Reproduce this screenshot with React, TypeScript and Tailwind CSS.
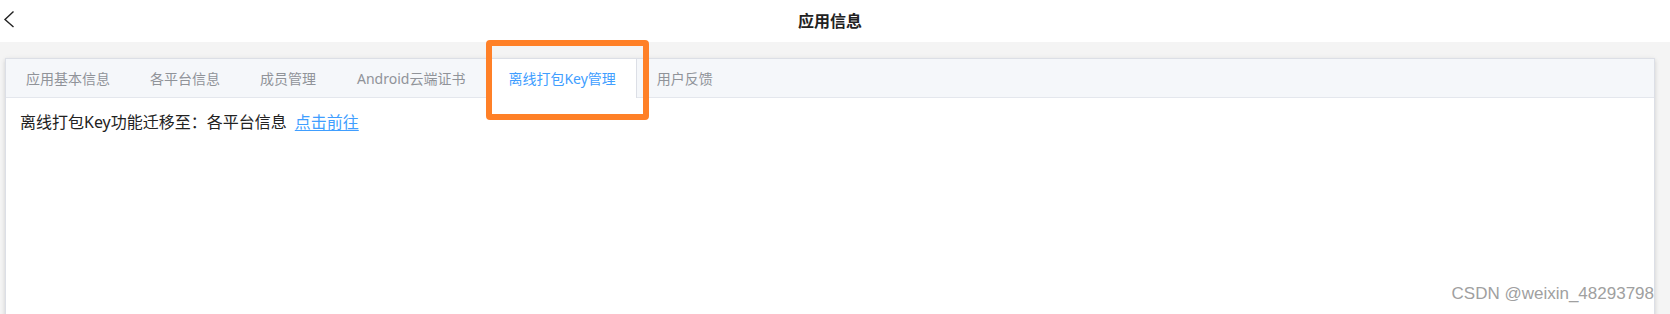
import React from "react";

const tabs = ["应用基本信息", "各平台信息", "成员管理", "Android云端证书", "离线打包Key管理", "用户反馈"];
const activeIndex = 4;

export default function App() {
  return (
    <div
      className="relative w-[1670px] h-[314px] overflow-hidden bg-[#f4f4f4]"
      style={{ fontFamily: '"Noto Sans", "Noto Sans CJK SC", sans-serif' }}
    >
      <div className="relative h-[42px] bg-white flex items-center justify-center">
        <svg className="absolute left-[3px] top-[10px]" width="12" height="18" viewBox="0 0 12 18" fill="none">
          <path d="M10.5 1.5 L2 9.5 L10.5 17" stroke="#222" strokeWidth="1.4" />
        </svg>
        <span className="mr-[10px] text-[16px] font-bold text-[#222] leading-none">应用信息</span>
      </div>
      <div className="pt-[16px] pl-[5px] pr-[15px]">
        <div className="bg-white border border-[#dcdfe6] shadow-[0_2px_4px_0_rgba(0,0,0,0.12),0_0_6px_0_rgba(0,0,0,0.04)] h-[300px]">
          <div className="flex h-[39px] bg-[#f5f7fa] border-b border-[#e4e7ed]">
            {tabs.map((t, i) =>
              i === activeIndex ? (
                <div
                  key={t}
                  className="relative -mb-px h-[39px] px-[20px] flex items-center bg-white border-x border-[#dcdfe6] text-[14px] text-[#409eff]"
                >
                  {t}
                  <div className="absolute left-[-2px] top-[-19px] w-[163px] h-[80px] border-[6px] border-[#ff8027] rounded-[4px]" />
                </div>
              ) : i === 3 ? (
                <div key={t} className="h-[39px] pl-[21px] pr-[22px] flex items-center text-[14px] text-[#909399]">
                  {t}
                </div>
              ) : (
                <div key={t} className="h-[39px] px-[20px] flex items-center text-[14px] text-[#909399]">
                  {t}
                </div>
              )
            )}
          </div>
          <div className="px-[14px] pt-[13px] text-[16px] leading-[22px] text-[#222] flex items-center">
            <span>离线打包Key功能迁移至：各平台信息</span>
            <span className="ml-[8px] text-[#409eff] underline underline-offset-2">点击前往</span>
          </div>
        </div>
      </div>
      <div
        className="absolute right-[16px] top-[283px] text-[17px] leading-[22px] text-[#a0a0a0]"
        style={{ fontFamily: '"Liberation Sans", Arial, sans-serif' }}
      >
        CSDN @weixin_48293798
      </div>
    </div>
  );
}
